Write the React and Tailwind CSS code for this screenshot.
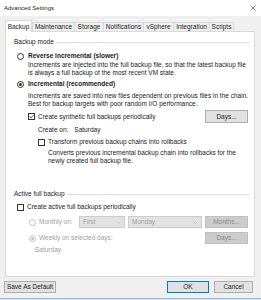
import React from "react";

function Radio({ checked, disabled }) {
  return (
    <span
      className={`w-[7px] h-[7px] rounded-full border bg-white flex items-center justify-center shrink-0 ${
        disabled ? "border-[#c2c2c2]" : "border-[#333333]"
      }`}
    >
      {checked && (
        <span
          className={`w-[3px] h-[3px] rounded-full ${disabled ? "bg-[#c2c2c2]" : "bg-[#333333]"}`}
        />
      )}
    </span>
  );
}

function Check({ checked }) {
  return (
    <span className="w-[7px] h-[7px] border border-[#333333] bg-white flex items-center justify-center shrink-0">
      {checked && (
        <svg width="5" height="5" viewBox="0 0 5 5">
          <path d="M0.5 2.6 L1.9 4 L4.5 1" fill="none" stroke="#333" strokeWidth="0.8" />
        </svg>
      )}
    </span>
  );
}

function Btn({ children, className = "", disabled }) {
  return (
    <div
      className={`h-[12px] border flex items-center justify-center shrink-0 ${
        disabled
          ? "border-[#bfbfbf] bg-[#cccccc] text-[#8a8a8a]"
          : "border-[#adadad] bg-[#e1e1e1] text-[#1a1a1a]"
      } ${className}`}
    >
      {children}
    </div>
  );
}

function Combo({ children, className = "" }) {
  return (
    <div
      className={`h-[12px] border border-[#cccccc] bg-[#e2e2e2] text-[#a0a0a0] flex items-center pl-[3px] pr-[3px] shrink-0 ${className}`}
    >
      <span className="flex-1">{children}</span>
      <svg width="5" height="3" viewBox="0 0 5 3">
        <path d="M0.5 0.5 L2.5 2.5 L4.5 0.5" fill="none" stroke="#b5b5b5" strokeWidth="0.7" />
      </svg>
    </div>
  );
}

function GroupHeader({ children }) {
  return (
    <div className="flex items-center h-[8px] pl-[8px] pr-[4px]">
      <span className="text-[#1a1a1a]">{children}</span>
      <span className="flex-1 h-px bg-[#dcdcdc] ml-[2px]" />
    </div>
  );
}

export default function App() {
  const tabs = [
    ["Maintenance", "w-[42px]"],
    ["Storage", "w-[29px]"],
    ["Notifications", "w-[40px]"],
    ["vSphere", "w-[30px]"],
    ["Integration", "w-[36px]"],
    ["Scripts", "w-[25px]"],
  ];
  return (
    <div className="w-[261px] h-[300px] overflow-hidden flex flex-col bg-[#f0f0f0] font-['Liberation_Sans',Arial,sans-serif] text-[6.5px] leading-[8px] text-[#1a1a1a] whitespace-nowrap">
      {/* Title bar */}
      <div className="h-[16px] bg-white flex items-center justify-between pl-[4px] pr-[5px] shrink-0 text-[6px]">
        <span>Advanced Settings</span>
        <svg width="6" height="6" viewBox="0 0 6 6">
          <path d="M0.5 0.5 L5.5 5.5 M5.5 0.5 L0.5 5.5" stroke="#555" strokeWidth="0.7" />
        </svg>
      </div>

      {/* Tabs */}
      <div className="mt-[4px] ml-[5px] flex items-end h-[11px] shrink-0">
        <div className="relative z-10 w-[27px] h-[12px] -mb-px bg-white border border-b-0 border-[#d9d9d9] flex items-center justify-center">
          Backup
        </div>
        {tabs.map(([t, w], i) => (
          <div
            key={t}
            className={`${w} h-[9px] border-t border-l border-[#d9d9d9] flex items-center justify-center ${
              i === tabs.length - 1 ? "border-r" : ""
            }`}
          >
            {t}
          </div>
        ))}
      </div>

      {/* Panel */}
      <div className="ml-[5px] w-[250px] h-[246px] bg-white border border-[#d9d9d9] flex flex-col shrink-0">
        <div className="mt-[6px]">
          <GroupHeader>Backup mode</GroupHeader>
        </div>
        <div className="mt-[6px] flex items-center h-[8px] pl-[11px] gap-[4px]">
          <Radio />
          <span className="font-bold">Reverse incremental (slower)</span>
        </div>
        <div className="mt-[1px] pl-[22px] pr-[6px]">
          <div>Increments are injected into the full backup file, so that the latest backup file</div>
          <div>is always a full backup of the most recent VM state.</div>
        </div>
        <div className="mt-[3px] flex items-center h-[8px] pl-[11px] gap-[4px]">
          <Radio checked />
          <span className="font-bold">Incremental (recommended)</span>
        </div>
        <div className="mt-[4px] pl-[22px] pr-[6px]">
          <div>Increments are saved into new files dependent on previous files in the chain.</div>
          <div>Best for backup targets with poor random I/O performance.</div>
        </div>
        <div className="mt-[2px] flex items-center h-[13px] pl-[22px] pr-[6px]">
          <Check checked />
          <span className="ml-[3px]">Create synthetic full backups periodically</span>
          <Btn className="ml-auto w-[43px] h-[13px]">Days...</Btn>
        </div>
        <div className="mt-[3px] flex items-center h-[8px] pl-[32px]">
          <span className="shrink-0">Create on:</span>
          <span className="ml-[6px]">Saturday</span>
        </div>
        <div className="mt-[4px] flex items-center h-[8px] pl-[32px]">
          <Check />
          <span className="ml-[3px]">Transform previous backup chains into rollbacks</span>
        </div>
        <div className="mt-[3px] pl-[42px] pr-[6px]">
          <div>Converts previous incremental backup chain into rollbacks for the</div>
          <div>newly created full backup file.</div>
        </div>

        <div className="mt-[25px]">
          <GroupHeader>Active full backup</GroupHeader>
        </div>
        <div className="mt-[5px] flex items-center h-[8px] pl-[11px]">
          <Check />
          <span className="ml-[3px]">Create active full backups periodically</span>
        </div>
        <div className="mt-[5px] flex items-center h-[12px] pl-[23px] pr-[6px] text-[#a0a0a0]">
          <Radio disabled />
          <span className="ml-[3px] w-[40px] shrink-0">Monthly on:</span>
          <Combo className="w-[46px]">First</Combo>
          <Combo className="ml-[3px] w-[74px]">Monday</Combo>
          <Btn disabled className="ml-auto w-[43px]">Months...</Btn>
        </div>
        <div className="mt-[4px] flex items-center h-[12px] pl-[23px] pr-[6px] text-[#a0a0a0]">
          <Radio checked disabled />
          <span className="ml-[3px]">Weekly on selected days:</span>
          <Btn disabled className="ml-auto w-[43px]">Days...</Btn>
        </div>
        <div className="mt-[2px] h-[8px] pl-[29px] text-[#a0a0a0]">Saturday</div>
      </div>

      {/* Bottom buttons */}
      <div className="mt-[4px] flex items-center h-[12px] pl-[4px] pr-[8px] shrink-0">
        <Btn className="w-[52px]">Save As Default</Btn>
        <Btn className="ml-auto w-[42px] !border-[#0078d7]">OK</Btn>
        <Btn className="ml-[5px] w-[39px]">Cancel</Btn>
      </div>
      <div className="flex-1" />
      <div className="h-px bg-[#8fbce6] shrink-0" />
      <div className="h-[1px] bg-[#d5e6f5] shrink-0" />
    </div>
  );
}
